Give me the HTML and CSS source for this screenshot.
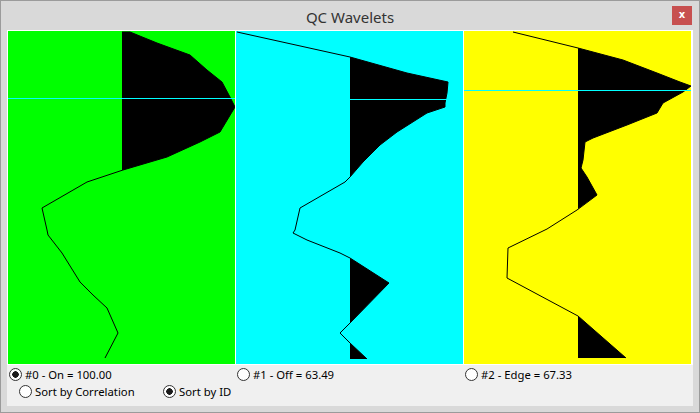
FILE: index.html
```html
<!DOCTYPE html>
<html lang="en">
<head>
    <meta charset="UTF-8">
    <title>QC Wavelets</title>
    <link rel="stylesheet" href="styles.css">
</head>
<body>

    <!-- Window -->
    <div class="window">
        <div class="titlebar">
            <span class="title">QC Wavelets</span>
            <button class="close" type="button">x</button>
        </div>

        <div class="client">
            <!-- Wavelet panels -->
            <div class="panels">
                <div class="panel green">
                    <svg width="227" height="333" viewBox="0 0 227 333">
                        <polygon class="lobe" points="114,1 122,1 149,12 182,24 199,39 214,51 222,66 227,76 212,101 192,111 159,126 115,139 114,139"/>
                        <polyline class="trace" points="114,1 122,1 149,12 182,24 199,39 214,51 222,66 227,76 212,101 192,111 159,126 115,139 79,151 34,177 39,199 40,204 54,222 72,251 85,264 99,277 110,302 97,327"/>
                        <line class="pick" x1="0" y1="67.5" x2="227" y2="67.5"/>
                    </svg>
                </div>
                <div class="panel cyan">
                    <svg width="227" height="333" viewBox="0 0 227 333">
                        <polygon class="lobe" points="114,26 171,42 212,51 211,62 209,72 209,76 191,82 161,101 144,114 127,131 114,146"/>
                        <polygon class="lobe" points="114,227 153,252 114,292"/>
                        <polygon class="lobe" points="114,312 131,328 114,328"/>
                        <polyline class="trace" points="1,1 114,26 171,42 212,51 211,62 209,72 209,76 191,82 161,101 144,114 127,131 114,146 109,151 64,177 59,199 57,202 71,209 104,222 114,227 153,252 114,292 104,302 114,312 131,328"/>
                        <line class="pick" x1="0" y1="68.5" x2="227" y2="68.5"/>
                    </svg>
                </div>
                <div class="panel yellow">
                    <svg width="227" height="333" viewBox="0 0 227 333">
                        <polygon class="lobe" points="114,17 159,29 193,42 216,51 227,55 219,61 199,72 193,82 163,94 129,107 121,111 119,129 117,137 123,146 133,164 114,178"/>
                        <polygon class="lobe" points="114,285 162,327 114,327"/>
                        <polyline class="trace" points="49,1 114,17 159,29 193,42 216,51 227,55 219,61 199,72 193,82 163,94 129,107 121,111 119,129 117,137 123,146 133,164 113,179 83,198 44,217 43,247 114,285 162,327"/>
                        <line class="pick" x1="0" y1="59.5" x2="227" y2="59.5"/>
                    </svg>
                </div>
            </div>

            <!-- Wavelet selection -->
            <div class="options">
                <div class="row wavelets">
                    <label><input type="radio" name="wavelet" checked> #0 - On = 100.00</label>
                    <label><input type="radio" name="wavelet"> #1 - Off = 63.49</label>
                    <label><input type="radio" name="wavelet"> #2 - Edge = 67.33</label>
                </div>
                <div class="row sort">
                    <label class="by-corr"><input type="radio" name="sort"> Sort by Correlation</label>
                    <label><input type="radio" name="sort" checked> Sort by ID</label>
                </div>
            </div>
        </div>
    </div>

</body>
</html>
```

FILE: styles.css
```css
/* Reset */
body {
    margin: 0;
    padding: 0;
}

/* Window frame */
.window {
    position: relative;
    box-sizing: border-box;
    width: 700px;
    height: 413px;
    display: flex;
    flex-direction: column;
    padding: 0 6px 6px 6px;
    background-color: #d9d9d9;
    border: 1px solid #9b9b9b;
    font-family: "Segoe UI", "Noto Sans", sans-serif;
}

/* Title bar */
.titlebar {
    height: 29px;
    display: flex;
    align-items: center;
    justify-content: center;
}

.titlebar .title {
    font-size: 15px;
    color: #333;
    padding-top: 2px;
}

.titlebar .close {
    position: absolute;
    top: 5px;
    right: 7px;
    width: 20px;
    height: 19px;
    padding: 0 0 2px 0;
    border: none;
    background-color: #c75050;
    color: #fff;
    font-family: "DejaVu Sans", sans-serif;
    font-size: 10px;
    font-weight: bold;
    line-height: 17px;
}

/* Client area */
.client {
    flex: 1;
    background-color: #f0f0f0;
}

/* Wavelet panels */
.panels {
    display: flex;
    gap: 1px;
    padding: 1px;
    background-color: #fff;
}

.panel {
    flex: 0 0 227px;
    height: 333px;
}

.panel svg {
    display: block;
}

.panel.green {
    background-color: #00ff00;
}

.panel.cyan {
    background-color: #00ffff;
}

.panel.yellow {
    background-color: #ffff00;
}

.panel .lobe {
    fill: #000;
}

.panel .trace {
    fill: none;
    stroke: #000;
    stroke-width: 1;
}

.panel .pick {
    stroke: #00ffff;
    stroke-width: 1;
    shape-rendering: crispEdges;
}

/* Radio options */
.options {
    font-size: 11.3px;
    color: #000;
}

.row {
    height: 17px;
    display: flex;
    align-items: center;
}

.row.wavelets {
    display: grid;
    grid-template-columns: repeat(3, 228px);
    padding: 1px 0 0 2px;
}

.row.sort {
    padding-left: 12px;
}

.row.sort .by-corr {
    width: 144px;
}

.row label {
    display: flex;
    align-items: center;
    white-space: nowrap;
}

.row input[type="radio"] {
    appearance: none;
    width: 13px;
    height: 13px;
    margin: 0 3px 0 0;
    border: 1px solid #333;
    border-radius: 50%;
    background-color: #fff;
}

.row input[type="radio"]:checked {
    background: radial-gradient(circle, #1a1a1a 0 3px, #fff 3.5px);
}
```
